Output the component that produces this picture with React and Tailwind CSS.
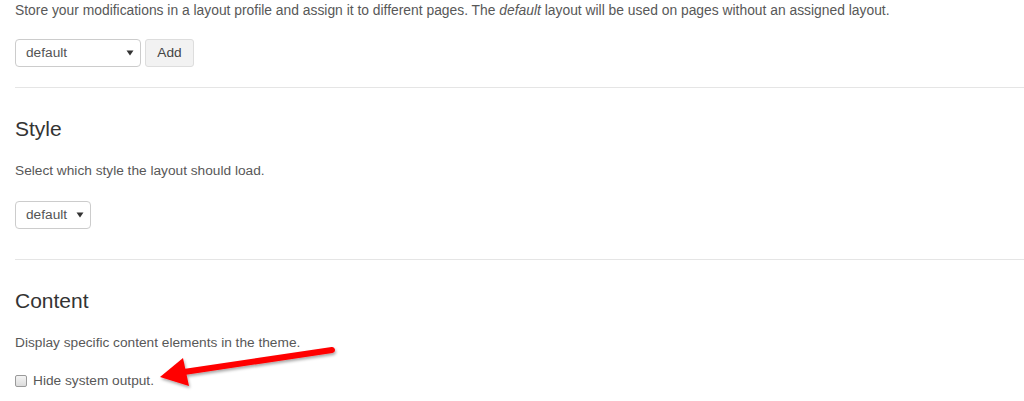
import React from "react";

function Caret() {
  return (
    <svg width="8" height="6" viewBox="0 0 8 6" className="shrink-0">
      <path d="M0.5 0.5 L7.5 0.5 L4 5.5 Z" fill="#333" />
    </svg>
  );
}

export default function App() {
  return (
    <div className="relative w-[1024px] h-[401px] overflow-hidden bg-white font-['Liberation_Sans',Arial,sans-serif] text-[13.7px] text-[#585858]">
      <div className="pl-[15px]">
        <p className="leading-[20px] text-[13.85px]">
          Store your modifications in a layout profile and assign it to different pages. The <em>default</em> layout will be used on pages without an assigned layout.
        </p>
        <div className="mt-[19px] flex gap-[4px] h-[28px]">
          <div className="w-[126px] h-[28px] border border-[#ccc] rounded-[4px] bg-white flex items-center justify-between pl-[10px] pr-[6px] text-[#555]">
            <span>default</span>
            <Caret />
          </div>
          <div className="w-[49px] h-[28px] border border-[#ddd] rounded-[3px] bg-[#f2f2f2] flex items-center justify-center text-[#444]">
            Add
          </div>
        </div>
        <div className="mt-[20px] h-px bg-[#e5e5e5]" />

        <h3 className="mt-[29px] text-[21px] leading-[24px] text-[#333]">Style</h3>
        <p className="mt-[20px] leading-[20px]">Select which style the layout should load.</p>
        <div className="mt-[20px] w-[76px] h-[28px] border border-[#ccc] rounded-[4px] bg-white flex items-center justify-between pl-[10px] pr-[6px] text-[#555]">
          <span>default</span>
          <Caret />
        </div>
        <div className="mt-[30px] h-px bg-[#e5e5e5]" />

        <h3 className="mt-[29px] text-[21px] leading-[24px] text-[#333]">Content</h3>
        <p className="mt-[20px] leading-[20px]">Display specific content elements in the theme.</p>
        <label className="mt-[18px] flex items-center gap-[6px] leading-[20px]">
          <span className="w-[12px] h-[12px] border border-[#9a9a9a] rounded-[2px] bg-gradient-to-b from-[#f4f4f4] to-[#dcdcdc]" />
          <span>Hide system output.</span>
        </label>
      </div>

      <svg className="absolute left-0 top-0 pointer-events-none" width="1024" height="401" viewBox="0 0 1024 401">
        <defs>
          <filter id="sh" x="-20%" y="-50%" width="140%" height="200%">
            <feDropShadow dx="1" dy="2" stdDeviation="1.5" floodColor="#000" floodOpacity="0.35" />
          </filter>
        </defs>
        <g filter="url(#sh)">
          <line x1="332" y1="350" x2="184" y2="372" stroke="#f00" strokeWidth="6" strokeLinecap="round" />
          <polygon points="160,377 183,358 189,386" fill="#f00" />
        </g>
      </svg>
    </div>
  );
}
